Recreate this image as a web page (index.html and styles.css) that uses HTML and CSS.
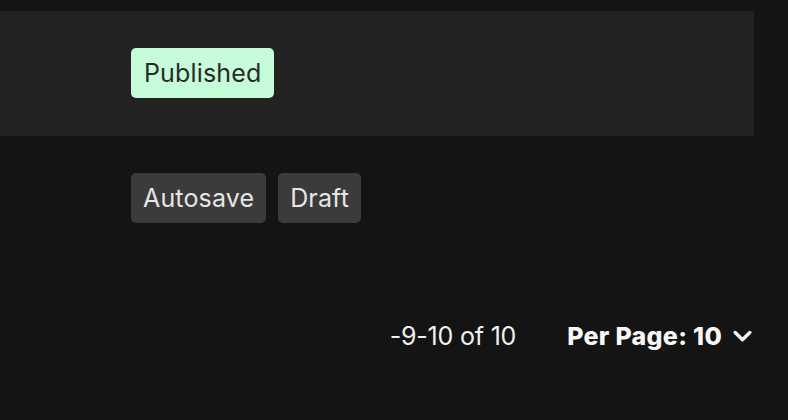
FILE: index.html
```html
<!DOCTYPE html>
<html>
<head>
<meta charset="utf-8">
<link rel="stylesheet" href="styles.css">
</head>
<body>
<div class="table">
  <div class="row row-alt">
    <div class="cell">
      <span class="badge badge-published">Published</span>
    </div>
  </div>
  <div class="row">
    <div class="cell">
      <span class="badge badge-muted">Autosave</span>
      <span class="badge badge-muted">Draft</span>
    </div>
  </div>
</div>
<div class="pagination">
  <span class="range">-9-10 of 10</span>
  <button class="per-page">Per Page: 10
    <svg class="chevron" width="19" height="13" viewBox="0 0 19 13"><path d="M2.2 2.5 L9.5 9.8 L16.8 2.5" fill="none" stroke="#f2f2f2" stroke-width="3.4" stroke-linecap="round" stroke-linejoin="round"/></svg>
  </button>
</div>
</body>
</html>
```
FILE: styles.css
```css
html, body {
  margin: 0;
  padding: 0;
  background: #141414;
  font-family: Inter, "Noto Sans", sans-serif;
  color: #ececec;
}
.table {
  padding-top: 11px;
  width: 754px;
}
.row {
  height: 125px;
  display: flex;
  align-items: flex-start;
  box-sizing: border-box;
  padding-top: 37px;
}
.row-alt {
  background: #222222;
}
.cell {
  padding-left: 131px;
  display: flex;
  gap: 12px;
}
.badge {
  display: inline-flex;
  align-items: center;
  height: 50px;
  padding: 0 13px;
  border-radius: 5px;
  font-size: 25px;
  letter-spacing: 0.15px;
  box-sizing: border-box;
}
.badge-published {
  background: #c6fcd7;
  color: #2a2a2a;
}
.badge-muted {
  background: #3b3b3b;
  color: #e6e6e6;
  padding: 0 12px;
}
.pagination {
  display: flex;
  justify-content: flex-end;
  align-items: center;
  padding-right: 36px;
  margin-top: 50px;
  height: 50px;
  gap: 51px;
}
.range {
  font-size: 25px;
  color: #f0f0f0;
  letter-spacing: -0.2px;
}
.per-page {
  background: none;
  border: 0;
  padding: 0;
  font-family: inherit;
  font-size: 25px;
  font-weight: 800;
  color: #f7f7f7;
  display: flex;
  align-items: center;
  gap: 11px;
  letter-spacing: 0.3px;
}
.chevron {
  display: block;
}
```
